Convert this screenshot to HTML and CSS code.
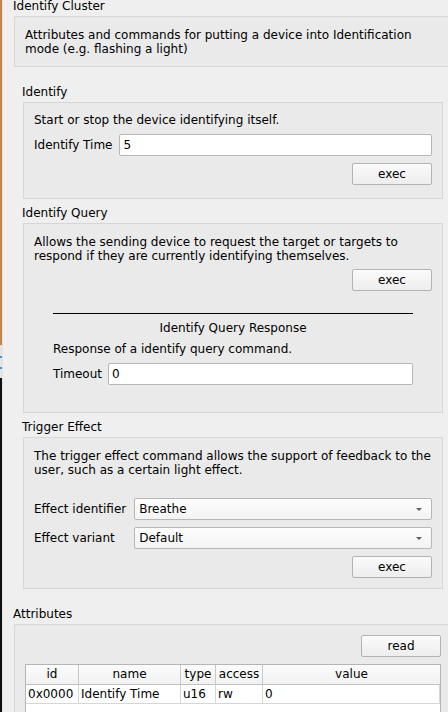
FILE: index.html
```html
<!DOCTYPE html>
<html>
<head>
<meta charset="utf-8">
<title>Identify Cluster</title>
<link rel="stylesheet" href="styles.css">
</head>
<body>
<div class="window">
  <div class="edge">
    <div class="edge-orange"></div>
    <div class="edge-mid"><span class="edge-blue"></span><span class="edge-blue"></span></div>
    <div class="edge-dark"></div>
  </div>
  <div class="main">
    <div class="title">Identify Cluster</div>
    <div class="desc">Attributes and commands for putting a device into Identification<br>mode (e.g. flashing a light)</div>

    <div class="sections">
      <div class="section">
        <div class="section-label">Identify</div>
        <div class="panel panel-identify">
          <div class="text">Start or stop the device identifying itself.</div>
          <div class="field-row">
            <span class="field-label">Identify Time</span>
            <div class="input">5</div>
          </div>
          <div class="actions"><button class="btn">exec</button></div>
        </div>
      </div>

      <div class="section">
        <div class="section-label">Identify Query</div>
        <div class="panel panel-query">
          <div class="text">Allows the sending device to request the target or targets to<br>respond if they are currently identifying themselves.</div>
          <div class="actions actions-tight"><button class="btn">exec</button></div>
          <div class="response">
            <div class="response-title">Identify Query Response</div>
            <div class="text response-text">Response of a identify query command.</div>
            <div class="field-row field-row-tight">
              <span class="field-label">Timeout</span>
              <div class="input">0</div>
            </div>
          </div>
        </div>
      </div>

      <div class="section">
        <div class="section-label">Trigger Effect</div>
        <div class="panel panel-trigger">
          <div class="text">The trigger effect command allows the support of feedback to the<br>user, such as a certain light effect.</div>
          <div class="form">
            <span class="field-label">Effect identifier</span>
            <div class="combo"><span>Breathe</span><span class="arrow"></span></div>
            <span class="field-label">Effect variant</span>
            <div class="combo"><span>Default</span><span class="arrow"></span></div>
          </div>
          <div class="actions"><button class="btn">exec</button></div>
        </div>
      </div>
    </div>

    <div class="title attr-title">Attributes</div>
    <div class="attr-panel">
      <div class="actions actions-first"><button class="btn">read</button></div>
      <div class="table">
        <div class="th">id</div>
        <div class="th">name</div>
        <div class="th">type</div>
        <div class="th">access</div>
        <div class="th th-last">value</div>
        <div class="td">0x0000</div>
        <div class="td">Identify Time</div>
        <div class="td">u16</div>
        <div class="td">rw</div>
        <div class="td td-last">0</div>
      </div>
    </div>
  </div>
</div>
</body>
</html>
```

FILE: styles.css
```css
html, body {
  margin: 0;
  padding: 0;
}

body {
  width: 448px;
  height: 712px;
  overflow: hidden;
  background: #efefef;
  font-family: "DejaVu Sans", "Liberation Sans", sans-serif;
  font-size: 12px;
  line-height: 14px;
  color: #000;
}

.window {
  display: flex;
  height: 712px;
  overflow: hidden;
}

.edge {
  width: 3px;
  flex-shrink: 0;
  display: flex;
  flex-direction: column;
  border-right: 1px solid #e2e2e2;
  box-sizing: border-box;
}

.edge-orange {
  height: 345px;
  background: #c98146;
  width: 2px;
}

.edge-mid {
  height: 33px;
  width: 2px;
  background: #e4e4e4;
  display: flex;
  flex-direction: column;
  padding-top: 11px;
  box-sizing: border-box;
  gap: 9px;
}

.edge-blue {
  display: block;
  width: 2px;
  height: 2px;
  background: #4a90d9;
}

.edge-dark {
  flex: 1;
  width: 2px;
  background: #111;
}

.main {
  margin-left: 11px;
  width: 438px;
  flex-shrink: 0;
}

.title {
  margin: -1px 0 0 -1px;
  height: 14px;
}

.desc {
  margin-top: 3px;
  border: 1px solid #d6d6d6;
  background: #eaeaea;
  padding: 11px 10px 10px;
}

.sections {
  padding: 18px 9px 11px;
}

.section {
  margin-top: 7px;
}

.section:first-child {
  margin-top: 0;
}

.section-label {
  margin-left: -1px;
  margin-bottom: 3px;
  height: 14px;
}

.panel {
  border: 1px solid #d6d6d6;
  background: #eaeaea;
  padding: 10px 10px 13px;
  display: flex;
  flex-direction: column;
}

.panel-query {
  padding-top: 11px;
  padding-bottom: 13px;
}

.panel-trigger {
  padding-top: 11px;
  padding-bottom: 10px;
}

.field-row {
  display: flex;
  align-items: center;
  gap: 7px;
  margin-top: 7px;
}

.field-row-tight {
  gap: 6px;
}

.field-label {
  white-space: nowrap;
}

.input {
  flex: 1;
  height: 22px;
  box-sizing: border-box;
  border: 1px solid #b7b7b7;
  border-radius: 2px;
  background: #fff;
  padding: 0 3px;
  line-height: 20px;
}

.actions {
  display: flex;
  justify-content: flex-end;
  margin-top: 7px;
}

.actions-tight {
  margin-top: 6px;
}

.actions-first {
  margin-top: 0;
}

.btn {
  width: 80px;
  height: 22px;
  box-sizing: border-box;
  padding: 0;
  margin: 0;
  border: 1px solid #b3b3b3;
  border-radius: 2px;
  background: linear-gradient(#fbfbfb, #ededed);
  font-family: "DejaVu Sans", "Liberation Sans", sans-serif;
  font-size: 12px;
  line-height: 20px;
  color: #000;
}

.response {
  margin: 22px 19px 0 19px;
  border-top: 1px solid #000;
  padding: 7px 0 14px;
}

.response-title {
  text-align: center;
}

.response-text {
  margin-top: 7px;
}

.form {
  margin-top: 21px;
  display: grid;
  grid-template-columns: auto 1fr;
  column-gap: 8px;
  row-gap: 7px;
  align-items: center;
}

.combo {
  height: 22px;
  box-sizing: border-box;
  border: 1px solid #b7b7b7;
  border-radius: 2px;
  background: linear-gradient(#fdfdfd, #f3f3f3);
  padding: 0 9px 0 4px;
  line-height: 20px;
  display: flex;
  align-items: center;
  justify-content: space-between;
}

.arrow {
  width: 0;
  height: 0;
  border-left: 3px solid transparent;
  border-right: 3px solid transparent;
  border-top: 3px solid #606060;
}

.attr-title {
  margin-top: 7px;
}

.attr-panel {
  margin-top: 3px;
  border: 1px solid #d6d6d6;
  border-bottom: none;
  background: #eaeaea;
  padding: 10px 10px 0;
  height: 88px;
  box-sizing: border-box;
}

.table {
  margin-top: 7px;
  display: grid;
  grid-template-columns: 53px 102px 35px 47px 1fr;
  grid-template-rows: 20px 19px;
  border: 1px solid #b5b5b5;
  border-bottom: none;
  background: #fff;
  height: 48px;
  box-sizing: border-box;
  align-content: start;
}

.th {
  text-align: center;
  background: linear-gradient(#fcfcfc, #f1f1f1);
  border-right: 1px solid #c8c8c8;
  border-bottom: 1px solid #c0c0c0;
  line-height: 19px;
}

.th-last, .td-last {
  border-right: none;
}

.td {
  border-right: 1px solid #d6d6d6;
  border-bottom: 1px solid #d6d6d6;
  padding-left: 2px;
  line-height: 18px;
  white-space: nowrap;
}
```
